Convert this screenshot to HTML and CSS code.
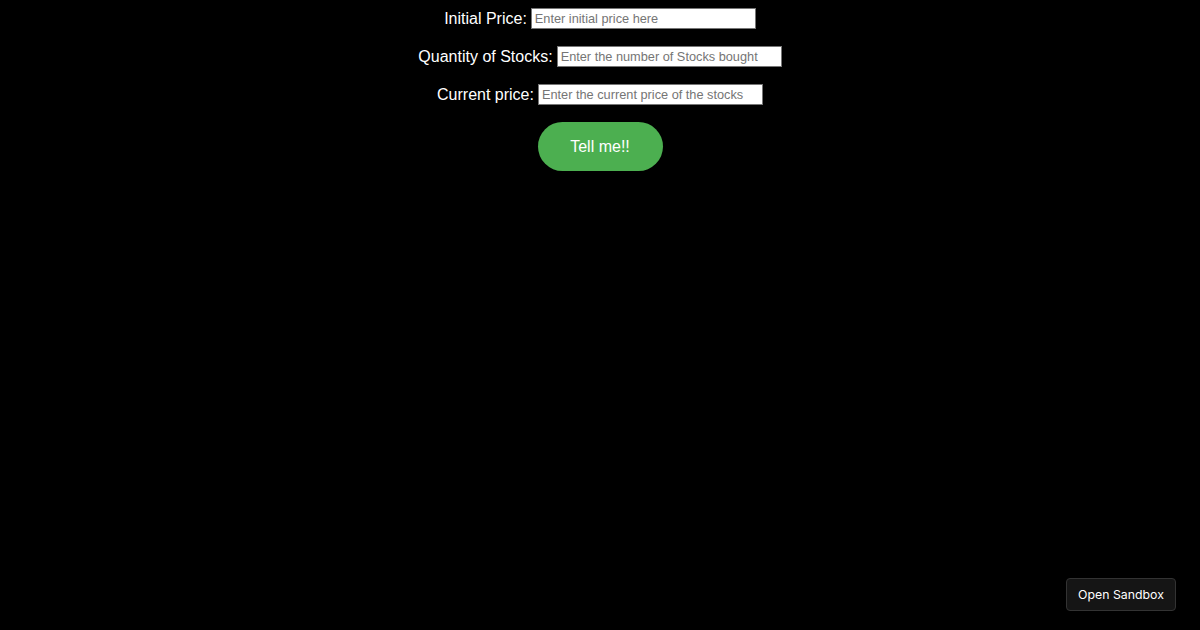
FILE: index.html
```html
<!DOCTYPE html>
<html>
<head>
<meta charset="utf-8">
<title>Stock Profit Calculator</title>
<link rel="stylesheet" href="styles.css">
</head>
<body>
<main class="form">
  <div class="row"><label class="label" for="ip">Initial Price:</label> <input class="field" id="ip" placeholder="Enter initial price here"></div>
  <div class="row"><label class="label" for="qty">Quantity of Stocks:</label> <input class="field" id="qty" placeholder="Enter the number of Stocks bought"></div>
  <div class="row"><label class="label" for="cp">Current price:</label> <input class="field" id="cp" placeholder="Enter the current price of the stocks"></div>
  <div class="actions"><button class="tell">Tell me!!</button></div>
</main>
<button class="sandbox">Open Sandbox</button>
</body>
</html>
```

FILE: styles.css
```css
html, body {
  background: #000;
}
body {
  margin: 8px;
  font-family: "Liberation Sans", Arial, sans-serif;
  color: #fff;
}
.form {
  display: flex;
  flex-direction: column;
  align-items: center;
  gap: 17px;
}
.row {
  display: flex;
  align-items: center;
  height: 21px;
  gap: 4px;
}
.label {
  font-size: 16px;
  line-height: 18px;
  color: #fff;
}
.field {
  box-sizing: border-box;
  width: 225px;
  height: 21px;
  margin: 0;
  padding: 1px 3px;
  border: 1px solid #767676;
  background: #fff;
  font-family: "Liberation Sans", Arial, sans-serif;
  font-size: 12.75px;
  color: #000;
}
.field::placeholder {
  color: #757575;
}
.tell {
  box-sizing: border-box;
  width: 125px;
  height: 49px;
  border: none;
  border-radius: 25px;
  background: #4caf50;
  color: #fff;
  font-family: "Liberation Sans", Arial, sans-serif;
  font-size: 16px;
  cursor: pointer;
}
.sandbox {
  position: fixed;
  right: 24px;
  bottom: 19px;
  box-sizing: border-box;
  width: 110px;
  height: 33px;
  padding: 0;
  background: #151515;
  border: 1px solid #333;
  border-radius: 4px;
  color: #fff;
  font-family: Inter, "Noto Sans", sans-serif;
  font-size: 12.3px;
}
```
